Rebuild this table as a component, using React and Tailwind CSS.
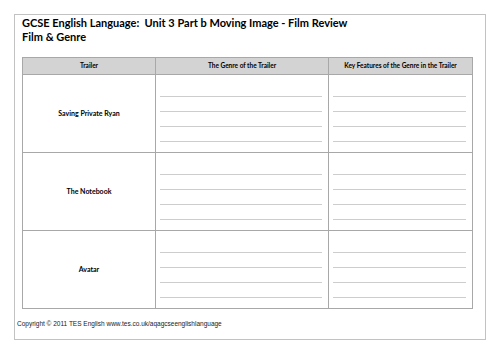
const rows = ["Saving Private Ryan", "The Notebook", "Avatar"];

function Lines() {
  return (
    <div className="flex flex-col gap-[14px] pt-[21px] pl-[4px] pr-[6px]">
      {[0, 1, 2, 3].map((i) => (
        <div key={i} className="h-px bg-[#cdcdcd]" />
      ))}
    </div>
  );
}

export default function App() {
  return (
    <div className="w-[500px] h-[354px] bg-white pt-[14px] pl-[14px]">
      <div className="w-[472px] h-[326px] border border-[#c2c2c2] pl-[7px] font-['Lato',sans-serif]">
        <div className="pt-[1px] text-[11px] leading-[13.5px] font-bold text-black">
          <div>GCSE English Language:&nbsp; Unit 3 Part b Moving Image - Film Review</div>
          <div>Film &amp; Genre</div>
        </div>

        <table className="mt-[14px] border-collapse w-[450px] table-fixed">
          <colgroup>
            <col className="w-[133px]" />
            <col className="w-[173px]" />
            <col className="w-[144px]" />
          </colgroup>
          <thead>
            <tr className="h-[17px] bg-[#d3d3d3] text-[6.5px] font-bold">
              <th className="border border-[#a8a8a8] font-bold">Trailer</th>
              <th className="border border-[#a8a8a8] font-bold">The Genre of the Trailer</th>
              <th className="border border-[#a8a8a8] font-bold">Key Features of the Genre in the Trailer</th>
            </tr>
          </thead>
          <tbody>
            {rows.map((r) => (
              <tr key={r} className="h-[78px]">
                <td className="border border-[#a8a8a8] text-center text-[7px] font-bold align-middle">{r}</td>
                <td className="border border-[#a8a8a8] align-top">
                  <Lines />
                </td>
                <td className="border border-[#a8a8a8] align-top">
                  <Lines />
                </td>
              </tr>
            ))}
          </tbody>
        </table>

        <p className="mt-[10px] -ml-[5px] text-[6.5px] leading-[9px] text-[#222] font-['Liberation_Sans',Arial,sans-serif]">
          Copyright © 2011 TES English www.tes.co.uk/aqagcseenglishlanguage
        </p>
      </div>
    </div>
  );
}
